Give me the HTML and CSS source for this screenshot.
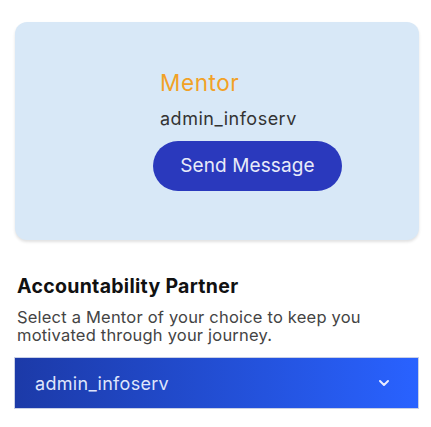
FILE: index.html
```html
<!DOCTYPE html>
<html lang="en">
<head>
    <meta charset="UTF-8">
    <meta name="viewport" content="width=device-width, initial-scale=1.0">
    <title>Accountability Partner</title>
    <link rel="stylesheet" href="styles.css">
</head>
<body>

<div class="mentor-card">
    <div class="mentor-info">
        <h2 class="mentor-title">Mentor</h2>
        <p class="mentor-name">admin_infoserv</p>
        <button class="send-button">Send Message</button>
    </div>
</div>

<div class="partner">
    <h3 class="partner-title">Accountability Partner</h3>
    <p class="partner-text">Select a Mentor of your choice to keep you motivated through your journey.</p>
    <div class="partner-select">
        <span>admin_infoserv</span>
        <svg class="chevron" width="12" height="8" viewBox="0 0 12 8"><path d="M2 2l4 4 4-4" fill="none" stroke="#e8ecff" stroke-width="2" stroke-linecap="round" stroke-linejoin="round"/></svg>
    </div>
</div>

</body>
</html>
```

FILE: styles.css
```css
body { font-family: Inter, "Open Sans", sans-serif; background: #fff; margin: 0; padding: 22px 12px 0 14px; }
.mentor-card { background: #d8e8f7; border-radius: 12px; height: 218px; margin-left: 1px; box-shadow: 0 2px 3px rgba(0,0,0,0.12); display: flex; align-items: center; padding-left: 138px; }
.mentor-info { display: flex; flex-direction: column; align-items: flex-start; }
.mentor-title { font-size: 22.5px; font-weight: 400; color: #f2a126; letter-spacing: 0.6px; line-height: 22px; margin: 0 0 14px 7px; }
.mentor-name { font-size: 18px; color: #333; letter-spacing: 0.5px; line-height: 22px; margin: 0 0 11px 7px; }
.send-button { background: #2a39bd; color: #e8ebf9; border: none; border-radius: 25px; width: 189px; height: 50px; font-family: inherit; font-size: 19px; letter-spacing: 0.1px; padding: 0; }
.partner { margin-top: 34px; }
.partner-title { font-size: 19.5px; font-weight: 700; color: #111; letter-spacing: 0.3px; line-height: 24px; margin: 0 0 10px 3px; }
.partner-text { font-size: 16.5px; color: #444; letter-spacing: 0.2px; line-height: 18px; max-width: 360px; margin: 0 0 13px 3px; }
.partner-select { height: 52px; background: linear-gradient(90deg, #1c3aa8, #2962ff); display: flex; align-items: center; justify-content: space-between; padding: 0 28px 0 20px; color: #dfe5fb; font-size: 18px; letter-spacing: 0.3px; border: 1px solid #c9d0e6; box-sizing: border-box; }
```
